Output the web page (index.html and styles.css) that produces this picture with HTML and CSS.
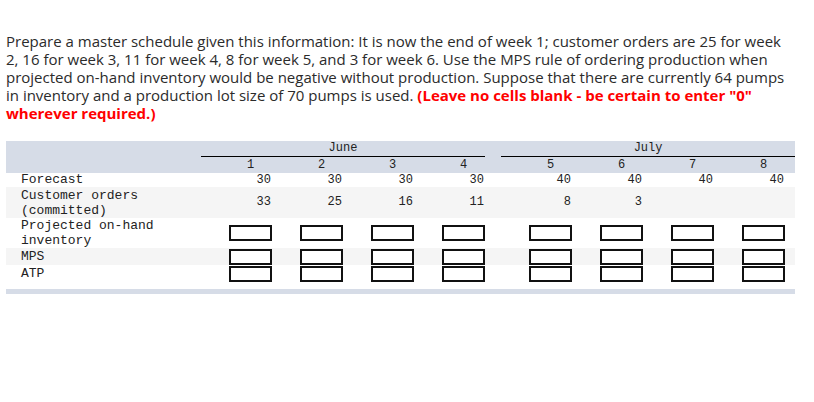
FILE: index.html
```html
<!DOCTYPE html>
<html>
<head>
<meta charset="utf-8">
<link rel="stylesheet" href="styles.css">
</head>
<body>
<div class="page">
  <p class="question">Prepare a master schedule given this information: It is now the end of week 1; customer orders are 25 for week<br>2, 16 for week 3, 11 for week 4, 8 for week 5, and 3 for week 6. Use the MPS rule of ordering production when<br>projected on-hand inventory would be negative without production. Suppose that there are currently 64 pumps<br>in inventory and a production lot size of 70 pumps is used. <strong class="warn">(Leave no cells blank - be certain to enter "0"<br>wherever required.)</strong></p>

  <table class="mps">
    <colgroup>
      <col class="c-label">
      <col class="c-week"><col class="c-week"><col class="c-week"><col class="c-week">
      <col class="c-gap">
      <col class="c-week"><col class="c-week"><col class="c-week"><col class="c-week">
      <col class="c-end">
    </colgroup>
    <thead>
      <tr class="month-row">
        <th></th>
        <th colspan="4" class="month">June</th>
        <th></th>
        <th colspan="5" class="month">July</th>
      </tr>
      <tr class="week-row">
        <th></th>
        <th class="wk">1</th><th class="wk">2</th><th class="wk">3</th><th class="wk">4</th>
        <th></th>
        <th class="wk">5</th><th class="wk">6</th><th class="wk">7</th><th class="wk">8</th>
        <th></th>
      </tr>
    </thead>
    <tbody>
      <tr class="r-forecast">
        <td class="label">Forecast</td>
        <td class="num">30</td><td class="num">30</td><td class="num">30</td><td class="num">30</td>
        <td></td>
        <td class="num">40</td><td class="num">40</td><td class="num">40</td><td class="num">40</td>
        <td></td>
      </tr>
      <tr class="r-orders alt">
        <td class="label">Customer orders<br>(committed)</td>
        <td class="num">33</td><td class="num">25</td><td class="num">16</td><td class="num">11</td>
        <td></td>
        <td class="num">8</td><td class="num">3</td><td class="num"></td><td class="num"></td>
        <td></td>
      </tr>
      <tr class="r-poh">
        <td class="label">Projected on-hand<br>inventory</td>
        <td class="in"><input type="text"></td><td class="in"><input type="text"></td><td class="in"><input type="text"></td><td class="in"><input type="text"></td>
        <td></td>
        <td class="in"><input type="text"></td><td class="in"><input type="text"></td><td class="in"><input type="text"></td><td class="in"><input type="text"></td>
        <td></td>
      </tr>
      <tr class="r-mps alt">
        <td class="label">MPS</td>
        <td class="in"><input type="text"></td><td class="in"><input type="text"></td><td class="in"><input type="text"></td><td class="in"><input type="text"></td>
        <td></td>
        <td class="in"><input type="text"></td><td class="in"><input type="text"></td><td class="in"><input type="text"></td><td class="in"><input type="text"></td>
        <td></td>
      </tr>
      <tr class="r-atp">
        <td class="label">ATP</td>
        <td class="in"><input type="text"></td><td class="in"><input type="text"></td><td class="in"><input type="text"></td><td class="in"><input type="text"></td>
        <td></td>
        <td class="in"><input type="text"></td><td class="in"><input type="text"></td><td class="in"><input type="text"></td><td class="in"><input type="text"></td>
        <td></td>
      </tr>
    </tbody>
  </table>
  <div class="table-foot"></div>
</div>
</body>
</html>
```
FILE: styles.css
```css
html, body {
  margin: 0;
  padding: 0;
  background: #fff;
}

.page {
  padding: 32px 0 0 6px;
  width: 789px;
}

.question {
  margin: 0 0 19px 0;
  font-family: "Open Sans", "Liberation Sans", sans-serif;
  font-size: 15px;
  line-height: 18px;
  color: #2b2b2b;
  white-space: nowrap;
}

.warn {
  color: #f00;
  font-weight: 700;
}

.mps {
  width: 789px;
  border-collapse: separate;
  border-spacing: 0;
  table-layout: fixed;
  font-family: "Liberation Mono", "Courier New", monospace;
  color: #222;
}

.c-label { width: 195px; }
.c-week { width: 71px; }
.c-gap { width: 16px; }
.c-end { width: 10px; }

.mps th,
.mps td {
  padding: 0;
  font-weight: normal;
  vertical-align: middle;
}

.mps thead th {
  background: #d6dce7;
  font-size: 12px;
  line-height: 15px;
}

.month-row th {
  height: 14px;
}

.month {
  text-align: center;
  border-bottom: 1px solid #000;
}

.week-row th {
  height: 16px;
}

.wk {
  padding-left: 28px !important;
  text-align: center;
}

.label {
  padding-left: 15px !important;
  font-size: 13px;
  line-height: 15px;
  color: #222;
}

.num {
  text-align: right;
  padding-right: 1px !important;
  font-size: 12px;
  line-height: 15px;
}

.alt td {
  background: #f5f5f5;
}

.r-forecast td { height: 14px; line-height: 14px; }
.r-orders td { height: 31px; }
.r-poh td { height: 30px; }
.r-mps td { height: 17px; }
.r-atp td { height: 17px; }

.in {
  text-align: right;
  line-height: 0;
}

.in input {
  box-sizing: border-box;
  width: 43px;
  height: 16px;
  margin: 0;
  padding: 0;
  border: 2px solid #111;
  border-radius: 0;
  background: #fff;
  vertical-align: middle;
}

.table-foot {
  margin-top: 7px;
  height: 5px;
  background: #d6dce7;
}
```
